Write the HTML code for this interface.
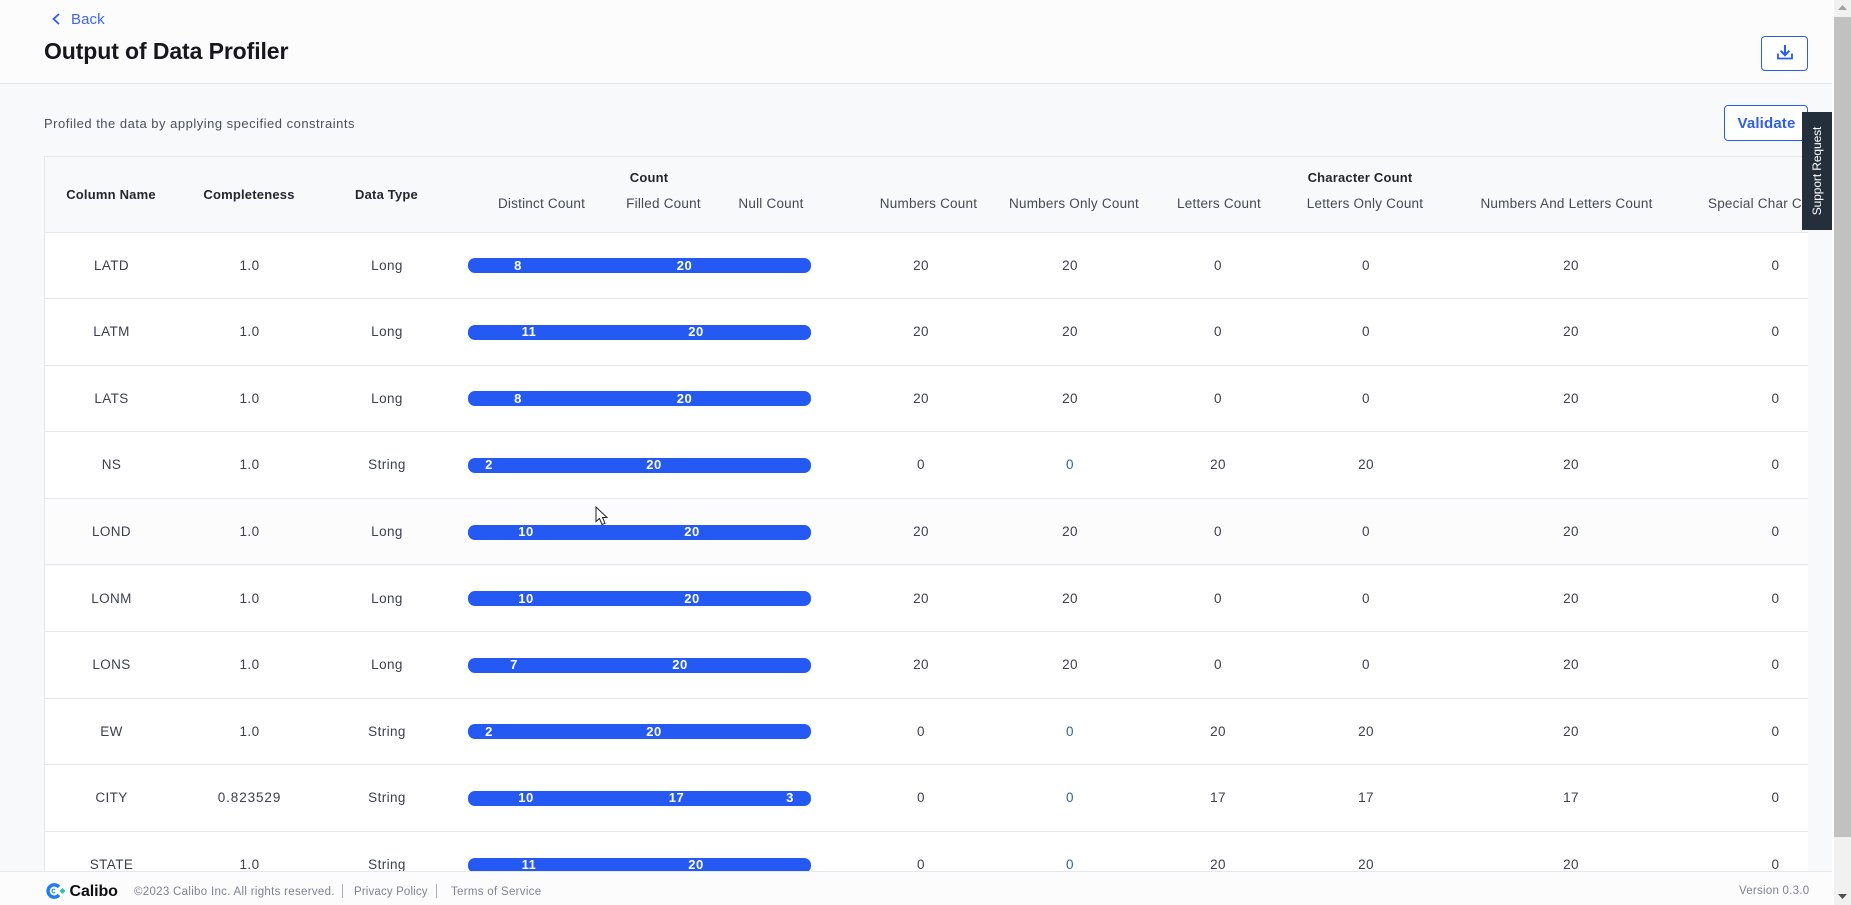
<!DOCTYPE html>
<html lang="en"><head><meta charset="utf-8"><title>Output of Data Profiler</title>
<style>
*{box-sizing:border-box}
html,body{margin:0;padding:0;width:1851px;height:905px;overflow:hidden;background:#f8f9fb;font-family:"Liberation Sans",sans-serif;color:#3a3f4b}
.abs{position:absolute;white-space:nowrap}
#hdr{position:absolute;left:0;top:0;width:1834px;height:84px;background:#fcfcfd;border-bottom:1px solid #e5e7ee}
#tbl{position:absolute;left:44px;top:156px;width:1764px;height:715px;overflow:hidden;border-left:1px solid #e5e7ee;border-top:1px solid #e5e7ee}
#head{position:absolute;left:-45px;top:-157px;width:1851px;height:0}
.row{position:absolute;left:0;width:1764px;height:66.6px;background:#fff;border-bottom:1px solid #e5e7ee}
.row span{position:absolute;top:0;line-height:66.4px;font-size:13.5px;letter-spacing:.4px;transform:translateX(-50%);white-space:nowrap;color:#3c414d}
.row .a{left:66.5px}.row .b{left:204.5px}.row .d{left:342px}
.row .n{left:876px}.row .o{left:1025px}.row .l{left:1173px}.row .m{left:1321px}.row .p{left:1526px}.row .q{left:1730.5px}
.row i{position:absolute;left:423px;top:25.7px;width:343px;height:15px;background:#2459f3;border-radius:7px;display:block}
.row b{position:absolute;top:26px;line-height:14px;font-size:13px;color:#fff;letter-spacing:.5px;transform:translateX(-50%)}
.th{position:absolute;white-space:nowrap;transform:translate(-50%,-50%);font-size:13px;font-weight:bold;color:#23262e;letter-spacing:.2px;line-height:16px}
.sh{position:absolute;white-space:nowrap;transform:translate(-50%,-50%);font-size:13.5px;color:#444955;letter-spacing:.22px;line-height:16px}
.blue{color:#2a6a90!important}
#foot{position:absolute;left:0;top:871px;width:1834px;height:34px;background:#fcfcfd;border-top:1px solid #e5e7ee}
.ft{position:absolute;top:884.5px;line-height:14px;font-size:11.5px;color:#7d8392;letter-spacing:.3px;white-space:nowrap}
</style></head><body>
<div id="hdr"></div>
<svg class="abs" style="left:50px;top:12px" width="12" height="14" viewBox="0 0 12 14"><path d="M9 2 L3.5 7 L9 12" fill="none" stroke="#2a5cf5" stroke-width="1.8"/></svg>
<div class="abs" style="left:71px;top:9.5px;line-height:20px;font-size:15px;color:#3f66ee;letter-spacing:.1px">Back</div>
<div class="abs" style="left:44px;top:37px;line-height:28px;font-size:23px;font-weight:bold;color:#15171c;letter-spacing:-.1px">Output of Data Profiler</div>
<div class="abs" style="left:1761px;top:36px;width:47px;height:35px;border:1px solid #2a5cf5;border-radius:4px;background:#fff"></div>
<svg class="abs" style="left:1776px;top:44px" width="18" height="17" viewBox="0 0 18 17"><path d="M9 1V11M4.6 6.8L9 11.2L13.4 6.8" fill="none" stroke="#2a5cf5" stroke-width="2.1"/><path d="M2 9.5V14.5H16V9.5" fill="none" stroke="#2a5cf5" stroke-width="1.8"/></svg>
<div class="abs" style="left:44px;top:115.5px;line-height:16px;font-size:13px;color:#4a4f5b;letter-spacing:.5px">Profiled the data by applying specified constraints</div>
<div class="abs" style="left:1724px;top:105px;width:84px;height:36px;border:1px solid #2a5cf5;border-radius:4px;background:#fff"></div>
<div class="abs" style="left:1724px;top:105px;width:84px;line-height:37px;text-align:center;font-size:15px;font-weight:bold;color:#2f5cf2;letter-spacing:.15px;padding-left:1px">Validate</div>

<div id="tbl">
<div id="head">
<div class="th" style="left:111px;top:195px">Column Name</div>
<div class="th" style="left:249px;top:195px">Completeness</div>
<div class="th" style="left:386.5px;top:195px">Data Type</div>
<div class="th" style="left:649px;top:178px">Count</div>
<div class="th" style="left:1360px;top:178px">Character Count</div>
<div class="sh" style="left:541.5px;top:204px">Distinct Count</div>
<div class="sh" style="left:663.5px;top:204px">Filled Count</div>
<div class="sh" style="left:771px;top:204px">Null Count</div>
<div class="sh" style="left:928.5px;top:204px">Numbers Count</div>
<div class="sh" style="left:1074px;top:204px">Numbers Only Count</div>
<div class="sh" style="left:1219px;top:204px">Letters Count</div>
<div class="sh" style="left:1365px;top:204px">Letters Only Count</div>
<div class="sh" style="left:1566.5px;top:204px">Numbers And Letters Count</div>
<div class="sh" style="left:1768.5px;top:204px">Special Char Count</div>
</div>
<div style="position:absolute;left:0;top:75px;width:1764px;height:1px;background:#e5e7ee"></div>

<div class="row" style="top:75.5px"><span class="a">LATD</span><span class="b">1.0</span><span class="d">Long</span><i></i><b style="left:473px">8</b><b style="left:639.5px">20</b><span class="n">20</span><span class="o">20</span><span class="l">0</span><span class="m">0</span><span class="p">20</span><span class="q">0</span></div>
<div class="row" style="top:142.1px"><span class="a">LATM</span><span class="b">1.0</span><span class="d">Long</span><i></i><b style="left:484px">11</b><b style="left:651px">20</b><span class="n">20</span><span class="o">20</span><span class="l">0</span><span class="m">0</span><span class="p">20</span><span class="q">0</span></div>
<div class="row" style="top:208.7px"><span class="a">LATS</span><span class="b">1.0</span><span class="d">Long</span><i></i><b style="left:473px">8</b><b style="left:639.5px">20</b><span class="n">20</span><span class="o">20</span><span class="l">0</span><span class="m">0</span><span class="p">20</span><span class="q">0</span></div>
<div class="row" style="top:275.3px"><span class="a">NS</span><span class="b">1.0</span><span class="d">String</span><i></i><b style="left:444px">2</b><b style="left:609px">20</b><span class="n">0</span><span class="o blue">0</span><span class="l">20</span><span class="m">20</span><span class="p">20</span><span class="q">0</span></div>
<div class="row" style="top:341.9px;background:#fcfcfd"><span class="a">LOND</span><span class="b">1.0</span><span class="d">Long</span><i></i><b style="left:481px">10</b><b style="left:647px">20</b><span class="n">20</span><span class="o">20</span><span class="l">0</span><span class="m">0</span><span class="p">20</span><span class="q">0</span></div>
<div class="row" style="top:408.5px"><span class="a">LONM</span><span class="b">1.0</span><span class="d">Long</span><i></i><b style="left:481px">10</b><b style="left:647px">20</b><span class="n">20</span><span class="o">20</span><span class="l">0</span><span class="m">0</span><span class="p">20</span><span class="q">0</span></div>
<div class="row" style="top:475.1px"><span class="a">LONS</span><span class="b">1.0</span><span class="d">Long</span><i></i><b style="left:469px">7</b><b style="left:635px">20</b><span class="n">20</span><span class="o">20</span><span class="l">0</span><span class="m">0</span><span class="p">20</span><span class="q">0</span></div>
<div class="row" style="top:541.7px"><span class="a">EW</span><span class="b">1.0</span><span class="d">String</span><i></i><b style="left:444px">2</b><b style="left:609px">20</b><span class="n">0</span><span class="o blue">0</span><span class="l">20</span><span class="m">20</span><span class="p">20</span><span class="q">0</span></div>
<div class="row" style="top:608.3px"><span class="a">CITY</span><span class="b" style="letter-spacing:.9px">0.823529</span><span class="d">String</span><i></i><b style="left:481px">10</b><b style="left:631.5px">17</b><b style="left:745px">3</b><span class="n">0</span><span class="o blue">0</span><span class="l">17</span><span class="m">17</span><span class="p">17</span><span class="q">0</span></div>
<div class="row" style="top:674.9px"><span class="a">STATE</span><span class="b">1.0</span><span class="d">String</span><i></i><b style="left:484px">11</b><b style="left:651px">20</b><span class="n">0</span><span class="o blue">0</span><span class="l">20</span><span class="m">20</span><span class="p">20</span><span class="q">0</span></div>
</div>

<div class="abs" style="left:1802px;top:112px;width:30px;height:118px;background:#232f3b"></div>
<div class="abs" style="left:1816.5px;top:170.5px;transform:translate(-50%,-50%) rotate(-90deg);font-size:12px;color:#fff;letter-spacing:-.1px;line-height:14px">Support Request</div>

<svg class="abs" style="left:595px;top:506px" width="14" height="21" viewBox="0 0 14 21"><path d="M1 1V15.5L4.5 12.5L7 18.5L10 17.3L7.5 11.5H12Z" fill="#fff" stroke="#222" stroke-width="1"/></svg>

<div id="foot"></div>
<svg class="abs" style="left:46px;top:881px" width="22" height="20" viewBox="0 0 22 20"><path d="M13 6A6.2 6.2 0 1 0 13 14" fill="none" stroke="#1d7df2" stroke-width="3.4"/><path d="M9 8.6A1.8 1.8 0 1 0 9 11.4" fill="none" stroke="#1d7df2" stroke-width="1"/><path d="M16.5 7L19.5 10L16.5 13L13.5 10Z" fill="#1fc9b5"/></svg>
<div class="abs" style="left:69.5px;top:880.5px;line-height:21px;font-size:16px;font-weight:bold;color:#0c0e12;letter-spacing:-.1px">Calibo</div>
<div class="ft" style="left:134px">©2023 Calibo Inc. All rights reserved.</div>
<div class="abs" style="left:342px;top:884px;width:1px;height:14px;background:#a9adb8"></div>
<div class="ft" style="left:354px;letter-spacing:.15px">Privacy Policy</div>
<div class="abs" style="left:436px;top:884px;width:1px;height:14px;background:#a9adb8"></div>
<div class="ft" style="left:451px">Terms of Service</div>
<div class="ft" style="left:1739px;top:884px;letter-spacing:.25px">Version 0.3.0</div>

<div class="abs" style="left:1832px;top:0;width:2px;height:905px;background:#fff"></div>
<div class="abs" style="left:1834px;top:0;width:17px;height:905px;background:#f1f1f1"></div>
<div class="abs" style="left:1834px;top:17px;width:17px;height:820px;background:#c1c1c1"></div>
<svg class="abs" style="left:1834px;top:0" width="17" height="17"><path d="M4 10L8.5 5L13 10Z" fill="#a3a3a3"/></svg>
<svg class="abs" style="left:1834px;top:888px" width="17" height="17"><path d="M4 6L8.5 11L13 6Z" fill="#505050"/></svg>
</body></html>
